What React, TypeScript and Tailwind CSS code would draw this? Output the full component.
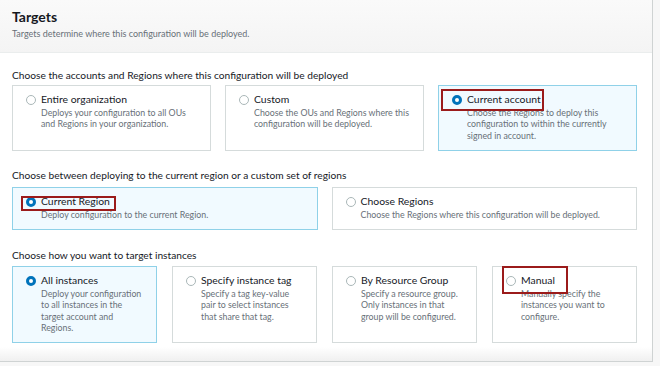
import React from 'react';

interface Choice {
  title: string;
  desc: string;
  selected?: boolean;
  // red annotation box drawn over the card
  mark?: string;
}

const Radio: React.FC<{ on?: boolean }> = ({ on }) =>
  on ? (
    <span className="block w-[10px] h-[10px] shrink-0 rounded-full border-[3px] border-[#0073bb] bg-white" />
  ) : (
    <span className="block w-[10px] h-[10px] shrink-0 rounded-full border border-[#aab7b8] bg-white" />
  );

const ChoiceCard: React.FC<{ choice: Choice; className: string }> = ({ choice, className }) => (
  <div
    className={`relative flex gap-[5px] pl-[13px] pr-[12px] pt-[7px] border ${
      choice.selected ? 'bg-[#f1faff] border-[#8fd1e8]' : 'bg-white border-[#d5dbdb]'
    } ${className}`}
  >
    <div className="pt-[2px]">
      <Radio on={choice.selected} />
    </div>
    <div className="flex flex-col">
      <span className="text-[10.4px] leading-[13px] text-[#16191f]">{choice.title}</span>
      <span className="mt-[1px] text-[8.8px] leading-[11.3px] text-[#687078]">{choice.desc}</span>
    </div>
    {choice.mark && <div className={`absolute border-2 border-[#9b1b1b] ${choice.mark}`} />}
  </div>
);

const accounts: Choice[] = [
  { title: 'Entire organization', desc: 'Deploys your configuration to all OUs and Regions in your organization.' },
  { title: 'Custom', desc: 'Choose the OUs and Regions where this configuration will be deployed.' },
  {
    title: 'Current account',
    desc: 'Choose the Regions to deploy this configuration to within the currently signed in account.',
    selected: true,
    mark: 'left-[2px] top-[3px] w-[103px] h-[22px]'
  }
];

const regions: Choice[] = [
  {
    title: 'Current Region',
    desc: 'Deploy configuration to the current Region.',
    selected: true,
    mark: 'left-[8px] top-[8px] w-[95px] h-[15px]'
  },
  { title: 'Choose Regions', desc: 'Choose the Regions where this configuration will be deployed.' }
];

const instances: Choice[] = [
  { title: 'All instances', desc: 'Deploy your configuration to all instances in the target account and Regions.', selected: true },
  { title: 'Specify instance tag', desc: 'Specify a tag key-value pair to select instances that share that tag.' },
  { title: 'By Resource Group', desc: 'Specify a resource group. Only instances in that group will be configured.' },
  {
    title: 'Manual',
    desc: 'Manually specify the instances you want to configure.',
    mark: 'left-[9px] -top-[1px] w-[66px] h-[28px]'
  }
];

export default function App() {
  return (
    <div
      className="flex w-[660px] h-[366px] bg-[#f7f7f7] overflow-hidden"
      style={{ fontFamily: 'Lato, "Open Sans", sans-serif' }}
    >
      <div className="flex flex-col w-[653px] h-[362px] bg-white border-r border-b border-[#cfd3d3]">
        <div className="h-[53px] px-[12px] pt-[7px] bg-gradient-to-b from-[#fafafa] to-[#f4f4f4] border-b border-[#eaeded]">
          <h2 className="text-[14px] leading-[20px] font-bold text-[#16191f]">Targets</h2>
          <p className="mt-[1px] text-[9px] leading-[12px] text-[#687078]">
            Targets determine where this configuration will be deployed.
          </p>
        </div>

        <div className="flex flex-col pl-[12px] pr-[15px] pt-[15px] flex-1">
          <p className="text-[10.2px] leading-[14px] text-[#16191f]">
            Choose the accounts and Regions where this configuration will be deployed
          </p>
          <div className="mt-[3px] grid grid-cols-3 gap-x-[14px]">
            {accounts.map(c => (
              <ChoiceCard key={c.title} choice={c} className="h-[66px]" />
            ))}
          </div>

          <p className="mt-[17px] text-[10.2px] leading-[14px] text-[#16191f]">
            Choose between deploying to the current region or a custom set of regions
          </p>
          <div className="mt-[5px] grid grid-cols-2 gap-x-[14px]">
            {regions.map(c => (
              <ChoiceCard key={c.title} choice={c} className="h-[43px]" />
            ))}
          </div>

          <p className="mt-[18px] text-[10.2px] leading-[14px] text-[#16191f]">
            Choose how you want to target instances
          </p>
          <div className="mt-[4px] grid grid-cols-4 gap-x-[15px]">
            {instances.map(c => (
              <ChoiceCard key={c.title} choice={c} className="h-[77px]" />
            ))}
          </div>
          <div className="flex-1" />
        </div>
        <div className="h-[14px] bg-gradient-to-b from-white to-[#f0f0f0]" />
      </div>
    </div>
  );
}
